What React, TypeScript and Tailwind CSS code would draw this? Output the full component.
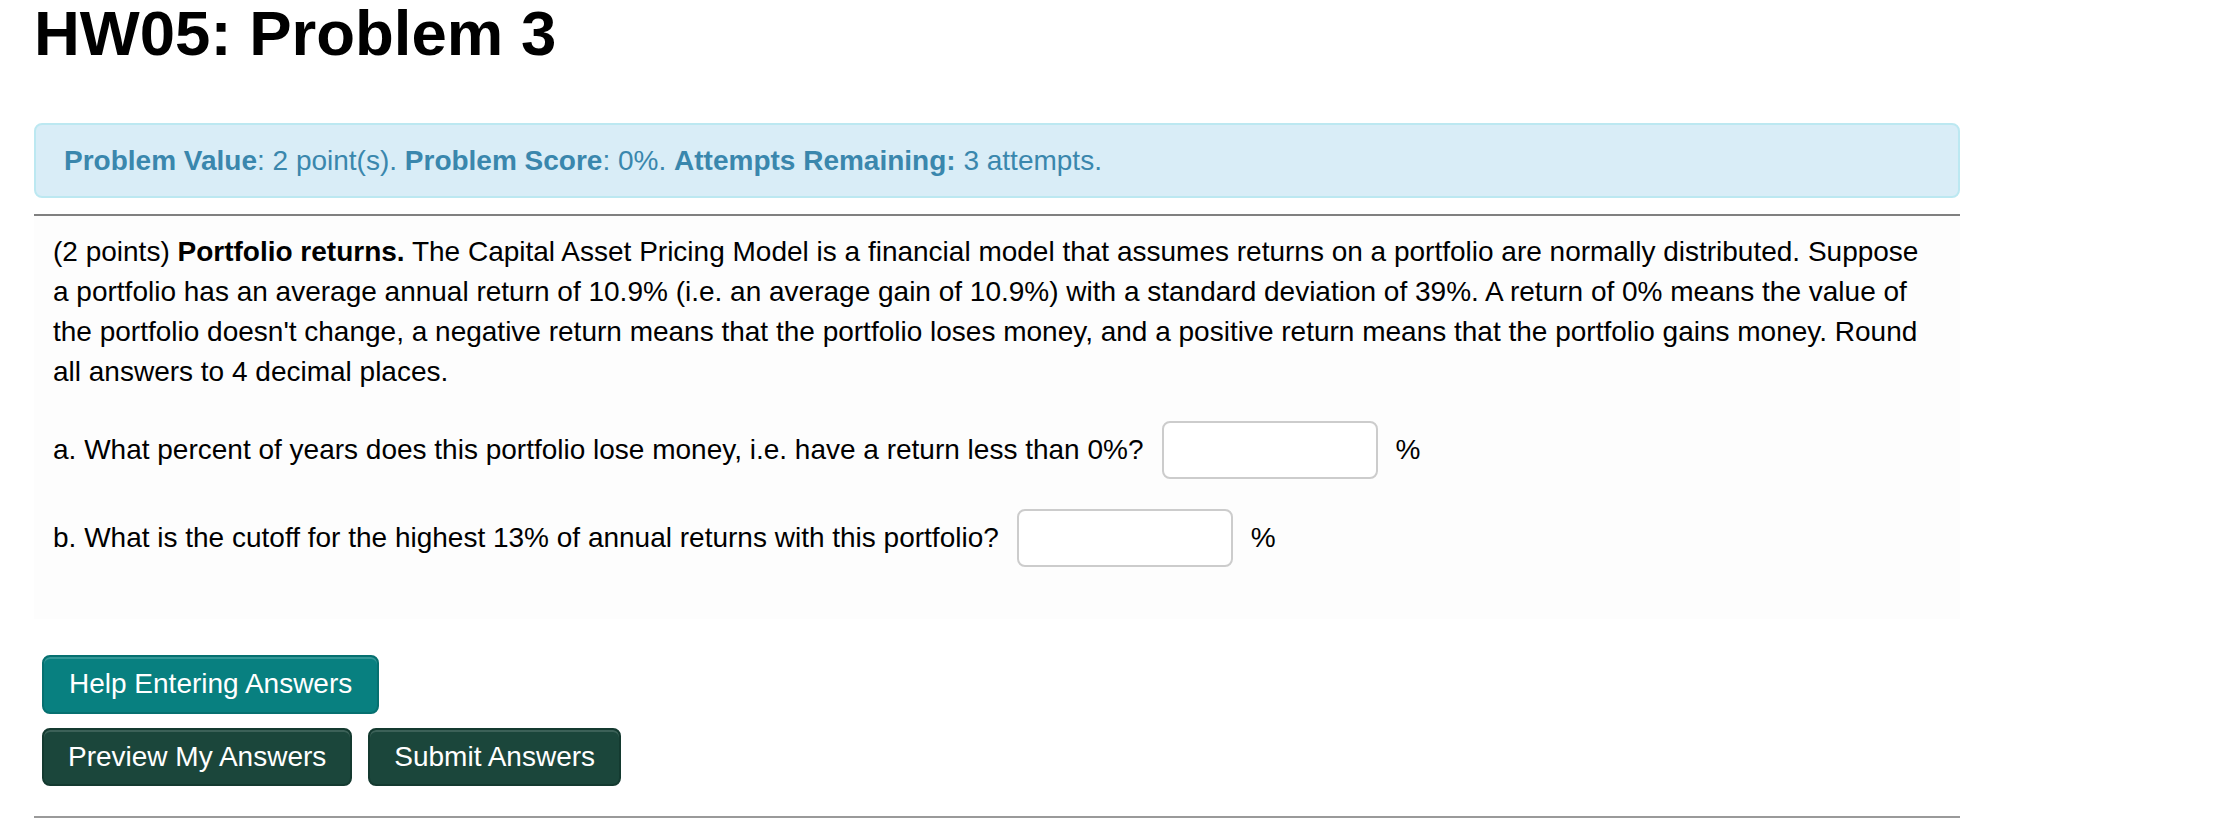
export default function App() {
  return (
    <div className="min-h-screen w-full bg-white font-['Liberation_Sans',Arial,sans-serif] text-black">
      <div className="w-[1926px] ml-[34px]">
        {/* Titre */}
        <h1 className="pt-[2px] text-[63.5px] leading-[63.5px] font-bold">
          HW05: Problem 3
        </h1>

        {/* Bandeau d'infos */}
        <div className="mt-[57px] rounded-[8px] border-2 border-[#bce8f1] bg-[#d9edf7] pt-[16px] pb-[15px] pl-[28px] pr-[70px] text-[28px] leading-[40px] text-[#3a87ad]">
          <b>Problem Value</b>: 2 point(s). <b>Problem Score</b>: 0%.{" "}
          <b>Attempts Remaining:</b> 3 attempts.
        </div>

        {/* Enoncé */}
        <div className="mt-[16px] border-t-2 border-[#808080] bg-[#fdfdfd] pt-[16px] pb-[52px] pl-[19px] pr-[20px] text-[28px] leading-[40px]">
          <p>
            (2 points) <b>Portfolio returns.</b> The Capital Asset Pricing Model is a financial model
            that assumes returns on a portfolio are normally distributed. Suppose a portfolio has an
            average annual return of 10.9% (i.e. an average gain of 10.9%) with a standard deviation
            of 39%. A return of 0% means the value of the portfolio doesn't change, a negative return
            means that the portfolio loses money, and a positive return means that the portfolio gains
            money. Round all answers to 4 decimal places.
          </p>

          <div className="mt-[29px] flex items-center gap-[18px]">
            <span>a. What percent of years does this portfolio lose money, i.e. have a return less than 0%?</span>
            <input
              type="text"
              className="h-[58px] w-[216px] rounded-[8px] border-2 border-[#cccccc] bg-white outline-none"
            />
            <span>%</span>
          </div>

          <div className="mt-[30px] flex items-center gap-[18px]">
            <span>b. What is the cutoff for the highest 13% of annual returns with this portfolio?</span>
            <input
              type="text"
              className="h-[58px] w-[216px] rounded-[8px] border-2 border-[#cccccc] bg-white outline-none"
            />
            <span>%</span>
          </div>
        </div>

        {/* Boutons */}
        <div className="mt-[36px] pl-[8px] flex flex-col items-start gap-[14px]">
          <button className="h-[59px] rounded-[8px] border-2 border-[#067070] bg-[#088080] px-[25px] text-[28px] leading-[40px] text-white shadow-[inset_0_2px_0_rgba(255,255,255,0.18)]">
            Help Entering Answers
          </button>
          <div className="flex gap-[16px]">
            <button className="h-[58px] rounded-[8px] border-2 border-[#143a30] bg-[#1b463b] px-[24px] text-[28px] leading-[40px] text-white shadow-[inset_0_2px_0_rgba(255,255,255,0.15)]">
              Preview My Answers
            </button>
            <button className="h-[58px] rounded-[8px] border-2 border-[#143a30] bg-[#1b463b] px-[24px] text-[28px] leading-[40px] text-white shadow-[inset_0_2px_0_rgba(255,255,255,0.15)]">
              Submit Answers
            </button>
          </div>
        </div>

        <div className="mt-[30px] border-t-2 border-[#9a9a9a]" />
      </div>
    </div>
  );
}
